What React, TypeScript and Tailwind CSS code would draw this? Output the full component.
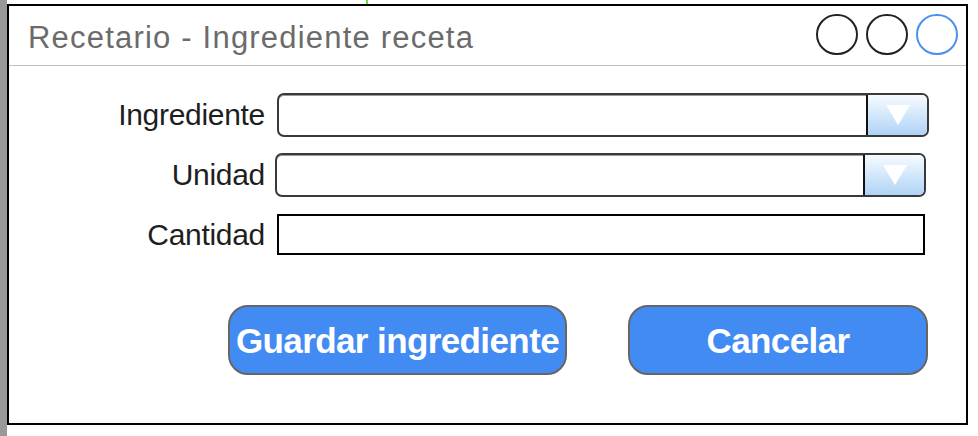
import React from "react";

function Arrow() {
  return (
    <svg width="26" height="22" viewBox="0 0 26 22">
      <polygon points="1,1 25,1 13,21" fill="#ffffff" />
    </svg>
  );
}

function Combo({ ml, w }: { ml: string; w: string }) {
  return (
    <div className={`${ml} ${w} h-[44px] flex border-2 border-[#3a3a3a] rounded-[7px] bg-white overflow-hidden shadow-[inset_0_1px_0_#9a9a9a]`}>
      <div className="flex-1" />
      <div className="w-[61px] h-full border-l-2 border-[#111] bg-gradient-to-b from-[#f7fbff] to-[#afd3f6] flex items-center justify-center">
        <Arrow />
      </div>
    </div>
  );
}

export default function App() {
  const label = "w-[256px] text-right text-[30px] tracking-[-0.3px] text-[#1e1e1e] leading-none";
  return (
    <div className="relative w-[978px] h-[436px] bg-white flex" style={{ fontFamily: '"Liberation Sans", Arial, sans-serif' }}>
      <div className="absolute left-[366px] top-0 w-[2px] h-[4px] bg-[#66dd44]" />
      <div className="w-[7px] h-full bg-[#999999]" />
      <div className="mt-[4px] w-[961px] h-[421px] border-2 border-black flex flex-col">
        <div className="h-[59px] flex items-center pl-[19px] pr-[8px] border-b border-[#c0c0c0] box-content">
          <div className="flex-1 text-[31px] tracking-[1.2px] text-[#6b6b6b] leading-none pt-[4px]">Recetario - Ingrediente receta</div>
          <div className="flex gap-[8px] -mt-[2px]">
            <div className="w-[42px] h-[41px] rounded-full border-2 border-[#222]" />
            <div className="w-[42px] h-[41px] rounded-full border-2 border-[#222]" />
            <div className="w-[42px] h-[41px] rounded-full border-2 border-[#4a90f0]" />
          </div>
        </div>
        <div className="flex flex-col">
          <div className="flex items-center mt-[27px]">
            <div className={label}>Ingrediente</div>
            <Combo ml="ml-[12px]" w="w-[652px]" />
          </div>
          <div className="flex items-center mt-[16px]">
            <div className={label}>Unidad</div>
            <Combo ml="ml-[10px]" w="w-[651px]" />
          </div>
          <div className="flex items-center mt-[17px]">
            <div className={label}>Cantidad</div>
            <div className="ml-[12px] w-[648px] h-[41px] border-2 border-black bg-white" />
          </div>
          <div className="flex mt-[50px] pl-[219px] gap-[61px]">
            <button className="w-[339px] h-[70px] rounded-[20px] border-2 border-[#666] bg-[#428bf3] text-white font-bold text-[35px] tracking-[-0.6px] leading-none flex items-center justify-center">
              Guardar ingrediente
            </button>
            <button className="w-[300px] h-[70px] rounded-[20px] border-2 border-[#666] bg-[#428bf3] text-white font-bold text-[35px] tracking-[-0.6px] leading-none flex items-center justify-center">
              Cancelar
            </button>
          </div>
        </div>
      </div>
    </div>
  );
}
